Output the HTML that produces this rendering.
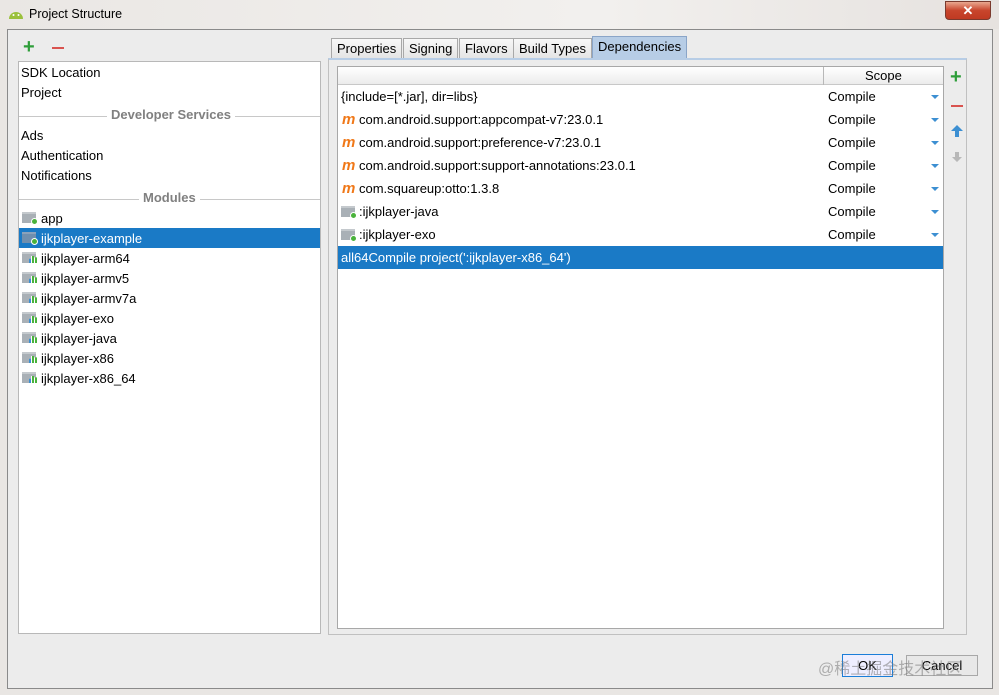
<!DOCTYPE html><html><head><style>
*{margin:0;padding:0;box-sizing:border-box}
body{width:999px;height:695px;overflow:hidden;background:#e9e6e3;font-family:"Liberation Sans",sans-serif;font-size:13px;color:#000;position:relative}
.a{position:absolute}
.t{white-space:nowrap}
.fold{display:inline-block;width:14px;height:11px;background:#a9b0b6;position:absolute;border-top:2px solid #c4c9cd}
.fold.g::after{content:"";position:absolute;right:-2px;bottom:-2px;width:5px;height:5px;border-radius:50%;background:#49b23b;border:1px solid #fff}
.fold.b::after{content:"";position:absolute;right:-1px;bottom:0;width:8px;height:7px;background:linear-gradient(90deg,#3c8fd2 0 2px,#fff 2px 3px,#49b23b 3px 5px,#fff 5px 6px,#49b23b 6px 8px);clip-path:polygon(0 40%,25% 40%,25% 0,62% 0,62% 20%,100% 20%,100% 100%,0 100%)}
.row{position:absolute;left:0;width:605px;height:23px;line-height:23px}
.m{color:#f07818;font-weight:bold;font-style:italic;font-size:15px;position:absolute;left:4px}
.cmp{position:absolute;left:490px}
.dd{position:absolute;left:593px;top:10px;width:0;height:0;border-left:4px solid transparent;border-right:4px solid transparent;border-top:4px solid #3c8fd2}
.tab{position:absolute;top:38px;height:21px;border:1px solid #a8a8a8;border-bottom:none;background:linear-gradient(#f8f8f8,#e4e4e4);line-height:20px;padding:0 5px}
</style></head><body>
<div class="a" style="left:0;top:0;width:999px;height:29px;background:linear-gradient(90deg,#eae7e4,#f2f0ee 60%,#e6e2df)"></div>
<svg class="a" style="left:8px;top:9px" width="16" height="10"><path d="M1 10 A7 7 0 0 1 15 10Z" fill="#9bc13c"/><circle cx="5.5" cy="6" r="1" fill="#fff"/><circle cx="10.5" cy="6" r="1" fill="#fff"/></svg>
<div class="a t" style="left:29px;top:7px;font-size:12.5px">Project Structure</div>
<div class="a" style="left:945px;top:1px;width:46px;height:19px;border:1px solid #7a3a2e;border-radius:0 0 4px 4px;background:linear-gradient(#e9a890,#c8452c 50%,#c03a22);color:#fff;font-weight:bold;text-align:center;line-height:17px;font-size:13px">✕</div>
<div class="a" style="left:7px;top:29px;width:986px;height:660px;background:#ececec;border:1px solid #8a8a8a"></div>
<div class="a" style="left:23px;top:36px;color:#2e9e3a;font-size:20px;font-weight:bold">+</div>
<div class="a" style="left:52px;top:47px;width:12px;height:2px;background:#d9534f"></div>
<div class="a" style="left:18px;top:61px;width:303px;height:573px;background:#fff;border:1px solid #b8b8b8">
<div class="a t" style="left:2px;top:3px">SDK Location</div>
<div class="a t" style="left:2px;top:23px">Project</div>
<div class="a" style="left:0;top:54px;width:301px;height:1px;background:#c8c8c8"></div>
<div class="a t" style="left:88px;top:45px;background:#fff;padding:0 4px;color:#808080;font-weight:bold">Developer Services</div>
<div class="a t" style="left:2px;top:66px">Ads</div>
<div class="a t" style="left:2px;top:86px">Authentication</div>
<div class="a t" style="left:2px;top:106px">Notifications</div>
<div class="a" style="left:0;top:137px;width:301px;height:1px;background:#c8c8c8"></div>
<div class="a t" style="left:120px;top:128px;background:#fff;padding:0 4px;color:#808080;font-weight:bold">Modules</div>
<div class="a" style="left:0;top:166px;width:301px;height:20px;background:#1a7ac6"></div>
<div class="fold g" style="left:3px;top:150px"></div><div class="a t" style="left:22px;top:149px">app</div>
<div class="fold g" style="left:3px;top:170px;background:#6f8fae;border-top-color:#8aa2bb"></div><div class="a t" style="left:22px;top:169px;color:#fff">ijkplayer-example</div>
<div class="fold b" style="left:3px;top:190px"></div><div class="a t" style="left:22px;top:189px">ijkplayer-arm64</div>
<div class="fold b" style="left:3px;top:210px"></div><div class="a t" style="left:22px;top:209px">ijkplayer-armv5</div>
<div class="fold b" style="left:3px;top:230px"></div><div class="a t" style="left:22px;top:229px">ijkplayer-armv7a</div>
<div class="fold b" style="left:3px;top:250px"></div><div class="a t" style="left:22px;top:249px">ijkplayer-exo</div>
<div class="fold b" style="left:3px;top:270px"></div><div class="a t" style="left:22px;top:269px">ijkplayer-java</div>
<div class="fold b" style="left:3px;top:290px"></div><div class="a t" style="left:22px;top:289px">ijkplayer-x86</div>
<div class="fold b" style="left:3px;top:310px"></div><div class="a t" style="left:22px;top:309px">ijkplayer-x86_64</div>
</div>
<div class="tab" style="left:331px">Properties</div>
<div class="tab" style="left:403px">Signing</div>
<div class="tab" style="left:459px">Flavors</div>
<div class="tab" style="left:513px">Build Types</div>
<div class="tab" style="left:592px;top:36px;height:23px;background:#b7cde6;border-color:#8aa5c8">Dependencies</div>
<div class="a" style="left:328px;top:58px;width:639px;height:577px;background:#ececec;border:1px solid #c0c0c0;border-top:2px solid #b7cde6"></div>
<div class="a" style="left:337px;top:66px;width:607px;height:563px;background:#fff;border:1px solid #a8a8a8">
<div class="a" style="left:0;top:0;width:605px;height:18px;background:linear-gradient(#fff,#ececec);border-bottom:1px solid #c8c8c8"></div>
<div class="a" style="left:485px;top:0;width:1px;height:18px;background:#b8b8b8"></div>
<div class="a t" style="left:527px;top:1px">Scope</div>
<div class="row" style="top:18px"><span class="a t" style="left:3px">{include=[*.jar], dir=libs}</span><span class="cmp">Compile</span><i class="dd"></i></div>
<div class="row" style="top:41px"><span class="m">m</span><span class="a t" style="left:21px">com.android.support:appcompat-v7:23.0.1</span><span class="cmp">Compile</span><i class="dd"></i></div>
<div class="row" style="top:64px"><span class="m">m</span><span class="a t" style="left:21px">com.android.support:preference-v7:23.0.1</span><span class="cmp">Compile</span><i class="dd"></i></div>
<div class="row" style="top:87px"><span class="m">m</span><span class="a t" style="left:21px">com.android.support:support-annotations:23.0.1</span><span class="cmp">Compile</span><i class="dd"></i></div>
<div class="row" style="top:110px"><span class="m">m</span><span class="a t" style="left:21px">com.squareup:otto:1.3.8</span><span class="cmp">Compile</span><i class="dd"></i></div>
<div class="row" style="top:133px"><span class="fold g" style="left:3px;top:6px"></span><span class="a t" style="left:21px">:ijkplayer-java</span><span class="cmp">Compile</span><i class="dd"></i></div>
<div class="row" style="top:156px"><span class="fold g" style="left:3px;top:6px"></span><span class="a t" style="left:21px">:ijkplayer-exo</span><span class="cmp">Compile</span><i class="dd"></i></div>
<div class="row" style="top:179px;background:#1a7ac6;color:#fff"><span class="a t" style="left:3px">all64Compile project(':ijkplayer-x86_64')</span></div>
</div>
<div class="a" style="left:950px;top:66px;color:#2e9e3a;font-size:20px;font-weight:bold">+</div>
<div class="a" style="left:951px;top:105px;width:12px;height:2px;background:#d9534f"></div>
<svg class="a" style="left:950px;top:124px" width="14" height="14"><path d="M7 1 L13 7 H9 V13 H5 V7 H1Z" fill="#3c8fd2"/></svg>
<svg class="a" style="left:951px;top:151px" width="12" height="12"><path d="M6 11 L11 6 H8 V1 H4 V6 H1Z" fill="#b8b8b8"/></svg>
<div class="a" style="left:842px;top:654px;width:51px;height:23px;border:1px solid #1a7ed8;background:#eef;text-align:center;line-height:21px">OK</div>
<div class="a" style="left:906px;top:655px;width:72px;height:21px;border:1px solid #a8a8a8;background:#e8e8e8;text-align:center;line-height:19px">Cancel</div>
<div class="a t" style="left:818px;top:655px;color:rgba(120,120,120,.55);font-size:16px;font-family:'Liberation Sans','Noto Sans CJK SC',sans-serif">@稀土掘金技术社区</div>
</body></html>
